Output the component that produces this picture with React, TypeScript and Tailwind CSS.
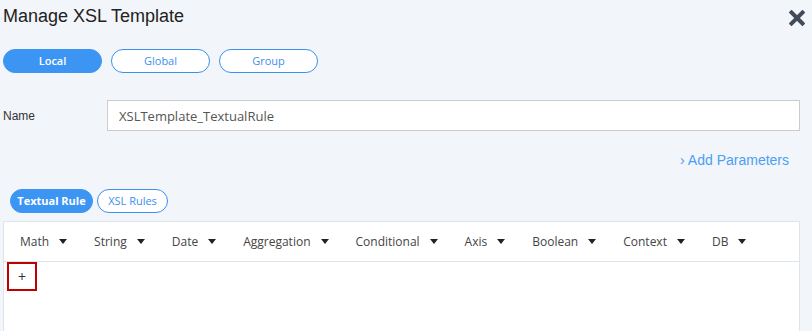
import { useState } from 'react';

const menus = ['Math', 'String', 'Date', 'Aggregation', 'Conditional', 'Axis', 'Boolean', 'Context', 'DB'];

function Caret() {
  return <span className="ml-[10px] inline-block h-0 w-0 border-l-[4px] border-r-[4px] border-t-[5px] border-l-transparent border-r-transparent border-t-[#222]" />;
}

export default function App() {
  const [scope, setScope] = useState('Local');
  const [tab, setTab] = useState('Textual Rule');

  return (
    <div className="h-[331px] overflow-hidden bg-[#f2f5f9] pl-[3px] font-['Open_Sans',sans-serif]">
      <div className="flex items-start justify-between pt-[6px] pr-[7px]">
        <h1 className="font-['Liberation_Sans',Arial,sans-serif] text-[18px] leading-[21px] text-[#222]">Manage XSL Template</h1>
        <svg width="16" height="16" viewBox="0 0 16 16" className="mt-[4px]">
          <path d="M2.5 2.5 L13.5 13.5 M13.5 2.5 L2.5 13.5" stroke="#434b5a" strokeWidth="4" strokeLinecap="square" />
        </svg>
      </div>

      <div className="mt-[22px] flex gap-[9px]">
        {['Local', 'Global', 'Group'].map((s) => (
          <button
            key={s}
            onClick={() => setScope(s)}
            className={`h-[24px] w-[99px] rounded-full border text-[11px] ${
              scope === s ? 'border-[#3d95f3] bg-[#3d95f3] font-semibold text-white' : 'border-[#3b8ff0] bg-white text-[#3b8ff0]'
            }`}
          >
            {s}
          </button>
        ))}
      </div>

      <div className="mt-[27px] flex items-center">
        <label className="w-[104px] font-['Liberation_Sans',Arial,sans-serif] text-[12px] text-[#333]">Name</label>
        <input
          defaultValue="XSLTemplate_TextualRule"
          className="h-[31px] w-[693px] border border-[#ccc] bg-white pl-[11px] text-[13px] text-[#555] outline-none"
        />
      </div>

      <div className="mt-[21px] flex justify-end pr-[23px]">
        <a className="font-['Liberation_Sans',Arial,sans-serif] text-[14px] leading-[17px] text-[#4a9ff5]">› Add Parameters</a>
      </div>

      <div className="mt-[20px] flex gap-[4px] pl-[7px]">
        {['Textual Rule', 'XSL Rules'].map((t) => (
          <button
            key={t}
            onClick={() => setTab(t)}
            className={`h-[24px] whitespace-nowrap rounded-full border text-[11px] ${
              tab === t ? 'w-[83px] border-[#3d95f3] bg-[#3d95f3] font-bold text-white' : 'w-[71px] border-[#3b8ff0] bg-white text-[#3b8ff0]'
            }`}
          >
            {t}
          </button>
        ))}
      </div>

      <div className="mt-[8px] h-[200px] w-[797px] border border-[#dde4ea] bg-white">
        <div className="flex h-[40px] items-center gap-[27px] border-b border-[#dde4ea] pl-[16px]">
          {menus.map((m) => (
            <div key={m} className="flex items-center text-[12px] text-[#444]">
              {m}
              <Caret />
            </div>
          ))}
        </div>
        <div className="ml-[3px] flex h-[29px] w-[30px] items-center justify-center border-2 border-[#c00000] text-[14px] text-[#333]">+</div>
      </div>
    </div>
  );
}
